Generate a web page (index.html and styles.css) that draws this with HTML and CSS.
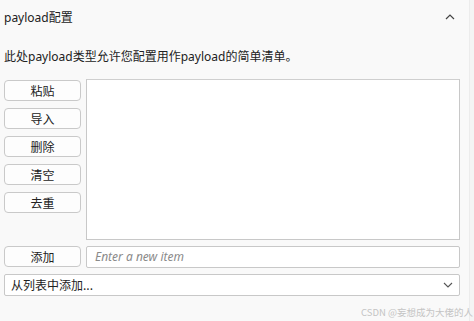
FILE: index.html
```html
<!DOCTYPE html>
<html>
<head>
<meta charset="utf-8">
<link rel="stylesheet" href="styles.css">
</head>
<body>
<div class="panel">
  <div class="header">
    <span class="title">payload配置</span>
    <svg class="chev" width="10" height="6" viewBox="0 0 10 6"><path d="M1 5 L5 1 L9 5" fill="none" stroke="#444" stroke-width="1.2"/></svg>
  </div>
  <p class="desc">此处payload类型允许您配置用作payload的简单清单。</p>
  <div class="list-area">
    <div class="btns">
      <button class="btn">粘贴</button>
      <button class="btn">导入</button>
      <button class="btn">删除</button>
      <button class="btn">清空</button>
      <button class="btn">去重</button>
    </div>
    <div class="listbox"></div>
  </div>
  <div class="add-row">
    <button class="btn">添加</button>
    <div class="input">Enter a new item</div>
  </div>
  <div class="select">
    <span>从列表中添加...</span>
    <svg width="10" height="6" viewBox="0 0 10 6"><path d="M1 1 L5 5 L9 1" fill="none" stroke="#555" stroke-width="1.1"/></svg>
  </div>
</div>
<div class="watermark">CSDN @妄想成为大佬的人</div>
</body>
</html>
```
FILE: styles.css
```css
html, body {
  margin: 0;
  padding: 0;
  background: #f4f4f4;
  font-family: "Noto Sans", "Noto Sans CJK SC", sans-serif;
  color: #222;
}
.panel {
  width: 465px;
  height: 321px;
  padding-left: 4px;
  background: #f9f9f9;
  border-right: 1px solid #ececec;
  box-sizing: content-box;
}
.header {
  display: flex;
  align-items: center;
  justify-content: space-between;
  height: 16px;
  padding-top: 10px;
  padding-right: 14px;
  font-size: 12px;
  line-height: 16px;
}
.chev { margin-top: -2px; }
.desc {
  margin: 23px 0 0 0;
  font-size: 12px;
  line-height: 16px;
}
.list-area {
  display: flex;
  gap: 5px;
  margin-top: 14px;
  height: 161px;
}
.btns {
  display: flex;
  flex-direction: column;
  gap: 7px;
  padding-top: 1px;
}
.btn {
  width: 77px;
  height: 21px;
  padding: 0;
  margin: 0;
  background: #fdfdfd;
  border: 1px solid #c9c9c9;
  border-radius: 4px;
  font-family: "Noto Sans CJK SC", sans-serif;
  font-size: 12px;
  line-height: 19px;
  color: #222;
}
.listbox {
  width: 374px;
  height: 161px;
  box-sizing: border-box;
  background: #fff;
  border: 1px solid #c8c8c8;
  border-top-color: #cfcfcf;
}
.add-row {
  display: flex;
  gap: 5px;
  margin-top: 6px;
  align-items: flex-start;
}
.input {
  width: 374px;
  height: 22px;
  box-sizing: border-box;
  background: #fff;
  border: 1px solid #c8c8c8;
  border-radius: 2px;
  padding-left: 8px;
  font-style: italic;
  font-size: 12px;
  line-height: 20px;
  color: #8a8a8a;
}
.select {
  display: flex;
  align-items: center;
  justify-content: space-between;
  margin-top: 6px;
  width: 456px;
  height: 22px;
  box-sizing: border-box;
  background: #fff;
  border: 1px solid #c8c8c8;
  border-radius: 2px;
  padding: 0 6px 0 6px;
  font-family: "Noto Sans CJK SC", sans-serif;
  font-size: 12px;
  line-height: 20px;
  color: #222;
}
.watermark {
  position: absolute;
  right: 1px;
  top: 305px;
  font-family: "Noto Sans CJK SC", sans-serif;
  font-size: 9.5px;
  line-height: 14px;
  color: #c4c4c4;
  white-space: nowrap;
}
```
